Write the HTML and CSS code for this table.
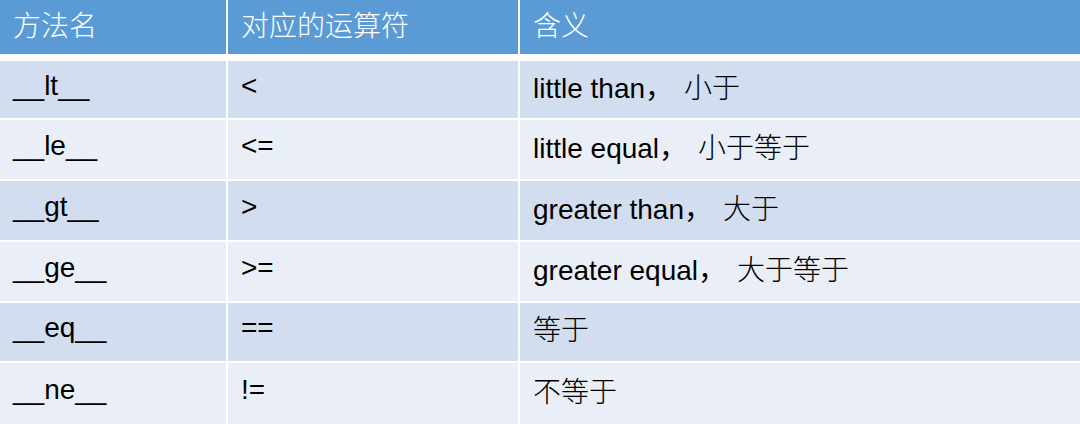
FILE: index.html
```html
<!DOCTYPE html>
<html lang="zh">
<head>
<meta charset="utf-8">
<link rel="stylesheet" href="styles.css">
</head>
<body>
<div class="table">
  <div class="cell head">方法名</div>
  <div class="cell head">对应的运算符</div>
  <div class="cell head">含义</div>

  <div class="cell odd">__lt__</div>
  <div class="cell odd">&lt;</div>
  <div class="cell odd">little than，<span class="cjk after">小于</span></div>

  <div class="cell even">__le__</div>
  <div class="cell even">&lt;=</div>
  <div class="cell even">little equal，<span class="cjk after">小于等于</span></div>

  <div class="cell odd">__gt__</div>
  <div class="cell odd">&gt;</div>
  <div class="cell odd">greater than，<span class="cjk after">大于</span></div>

  <div class="cell even">__ge__</div>
  <div class="cell even">&gt;=</div>
  <div class="cell even">greater equal，<span class="cjk after">大于等于</span></div>

  <div class="cell odd">__eq__</div>
  <div class="cell odd">==</div>
  <div class="cell odd"><span class="cjk">等于</span></div>

  <div class="cell even">__ne__</div>
  <div class="cell even">!=</div>
  <div class="cell even"><span class="cjk">不等于</span></div>
</div>
</body>
</html>
```

FILE: styles.css
```css
html, body {
  margin: 0;
  padding: 0;
  background: #ffffff;
}

body {
  width: 1080px;
  height: 424px;
  overflow: hidden;
  font-family: "Liberation Sans", "Noto Sans CJK SC", sans-serif;
  font-size: 28px;
  color: #000000;
}

.table {
  display: grid;
  grid-template-columns: 226px 290px 1fr;
  grid-template-rows: 59px 57px 59px 59px 59px 58px 61px;
  column-gap: 2px;
  row-gap: 2px;
}

.cell {
  display: flex;
  align-items: center;
  padding-left: 13px;
  padding-bottom: 8px;
  white-space: nowrap;
}

.head {
  background: #5b9bd5;
  color: #ffffff;
  font-family: "Noto Sans CJK SC", sans-serif;
  font-weight: 300;
  margin-bottom: 5px;
  padding-bottom: 6px;
}

.odd {
  background: #d2deef;
}

.even {
  background: #eaeff7;
}

.cjk {
  font-family: "Noto Sans CJK SC", sans-serif;
  font-weight: 300;
}

.after {
  margin-left: 11px;
}
```
